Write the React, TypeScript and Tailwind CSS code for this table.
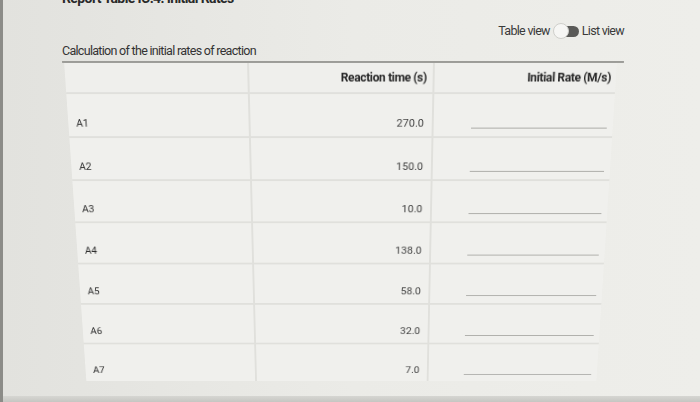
import React from "react";

const rows = [
  { id: "A1", t: "270.0" },
  { id: "A2", t: "150.0" },
  { id: "A3", t: "10.0" },
  { id: "A4", t: "138.0" },
  { id: "A5", t: "58.0" },
  { id: "A6", t: "32.0" },
  { id: "A7", t: "7.0" },
];

export default function App() {
  return (
    <div
      className="w-[700px] h-[402px] overflow-hidden bg-gradient-to-r from-[#e2e2de] via-[#ebebe7] to-[#eeeeea] border-l-[3px] border-[#8c8c88] flex flex-col"
      style={{ fontFamily: "Roboto, 'Noto Sans', sans-serif" }}
    >
      <div className="h-[396px] shrink-0 flex flex-col">
        <div className="-mt-[9px] ml-[59px] h-[15px] text-[14px] leading-[15px] font-bold text-[#2a2a2a] tracking-[-0.6px]">
          Report Table IC.4: Initial Rates
        </div>
        <div className="mt-[17px] h-[16px] flex justify-end items-center pr-[76px] text-[12.5px] text-[#3a3a3a] tracking-[-0.7px]">
          <span>Table view</span>
          <span className="relative mx-[3px] w-[26px] h-[16px] flex items-center">
            <span className="ml-[6px] w-[20px] h-[11px] rounded-r-full bg-[#5a5a58]" />
            <span className="absolute left-0 top-0 w-[16px] h-[16px] rounded-full bg-[#f6f6f4] border border-[#cfcfcb]" />
          </span>
          <span>List view</span>
        </div>
        <div className="mt-[5px] ml-[59px] h-[14px] text-[12.5px] leading-[14px] text-[#333] tracking-[-0.7px]">
          Calculation of the initial rates of reaction
        </div>
        <div className="mt-[3px] origin-top [transform:perspective(800px)_rotateX(-11deg)]">
          <div className="ml-[59px] w-[562px] h-[2px] bg-[#9c9c98]" />
          <div className="ml-[61px] w-[553px] grid grid-cols-[183px_184px_182px] gap-[2px] bg-[#e0e0dc]">
            <div className="h-[30px] bg-[#efefec]" />
            <div className="h-[30px] bg-[#efefec] flex items-center justify-end pr-[6px] text-[12px] font-bold text-[#262626] tracking-[-0.35px]">
              Reaction time (s)
            </div>
            <div className="h-[30px] bg-[#efefec] flex items-center justify-end pr-[5px] text-[12px] font-bold text-[#262626] tracking-[-0.35px]">
              Initial Rate (M/s)
            </div>
            {rows.map((r) => (
              <React.Fragment key={r.id}>
                <div className="h-[44px] bg-[#f0f0ed] flex items-end pb-[7px] pl-[8px] text-[10.5px] leading-[12px] text-[#2e2e2e]">
                  {r.id}
                </div>
                <div className="h-[44px] bg-[#f0f0ed] flex items-end justify-end pb-[7px] pr-[8px] text-[11px] leading-[12px] text-[#3e3e3e]">
                  {r.t}
                </div>
                <div className="h-[44px] bg-[#f0f0ed] flex items-end justify-end pb-[8px] pr-[6px]">
                  <div className="w-[138px] h-[1px] bg-[#a8a8a4]" />
                </div>
              </React.Fragment>
            ))}
          </div>
        </div>
      </div>
      <div className="flex-1 bg-gradient-to-b from-[#d6d6d2] to-[#c6c6c2]" />
    </div>
  );
}
